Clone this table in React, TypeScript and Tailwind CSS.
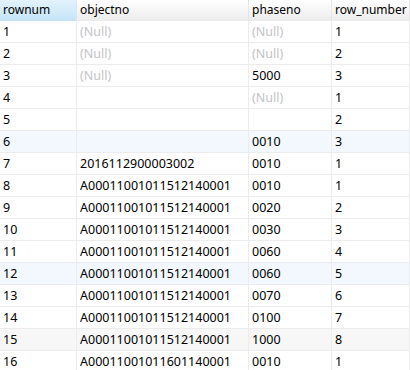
const columns = ["rownum", "objectno", "phaseno", "row_number"];

type Cell = string | null;

const rows: { cells: Cell[]; tone?: "blue" | "gray" }[] = [
  { cells: ["1", null, null, "1"] },
  { cells: ["2", null, null, "2"] },
  { cells: ["3", null, "5000", "3"] },
  { cells: ["4", "", null, "1"] },
  { cells: ["5", "", "", "2"] },
  { cells: ["6", "", "0010", "3"], tone: "blue" },
  { cells: ["7", "2016112900003002", "0010", "1"] },
  { cells: ["8", "A00011001011512140001", "0010", "1"] },
  { cells: ["9", "A00011001011512140001", "0020", "2"] },
  { cells: ["10", "A00011001011512140001", "0030", "3"] },
  { cells: ["11", "A00011001011512140001", "0060", "4"] },
  { cells: ["12", "A00011001011512140001", "0060", "5"], tone: "blue" },
  { cells: ["13", "A00011001011512140001", "0070", "6"] },
  { cells: ["14", "A00011001011512140001", "0100", "7"] },
  { cells: ["15", "A00011001011512140001", "1000", "8"], tone: "gray" },
  { cells: ["16", "A00011001011601140001", "0010", "1"] },
];

const gridCols = "grid grid-cols-[77px_172px_83px_78px]";

export default function App() {
  return (
    <div
      className="w-[410px] h-[370px] overflow-hidden bg-white text-[12.5px] text-black"
      style={{ fontFamily: '"Segoe UI", "Noto Sans", "DejaVu Sans", sans-serif' }}
    >
      <div className={`${gridCols} h-[21px] text-[12px]`}>
        {columns.map((c, i) => (
          <div
            key={c}
            className={
              "flex items-center pl-[3px] border-r leading-none whitespace-nowrap " +
              (i === 0
                ? "bg-gradient-to-b from-[#e3f2fb] to-[#c4e5f8] border-[#d8e8f2]"
                : "bg-gradient-to-b from-[#ffffff] to-[#ececec] border-[#e6e6e6]")
            }
          >
            <span className="pb-[1px]">{c}</span>
          </div>
        ))}
      </div>
      {rows.map((r, ri) => (
        <div
          key={ri}
          className={
            `${gridCols} h-[22px] border-b border-[#ececec] ` +
            (r.tone === "blue" ? "bg-[#f2f8fd]" : r.tone === "gray" ? "bg-[#f7f7f7]" : "bg-white")
          }
        >
          {r.cells.map((v, ci) => (
            <div
              key={ci}
              className={
                "flex items-center pl-[3px] border-r border-[#ececec] whitespace-pre leading-none " +
                (v === null ? "text-[#c3c3c8]" : "text-black")
              }
            >
              <span className="pt-[1px]">{v === null ? "(Null)" : v}</span>
            </div>
          ))}
        </div>
      ))}
    </div>
  );
}
